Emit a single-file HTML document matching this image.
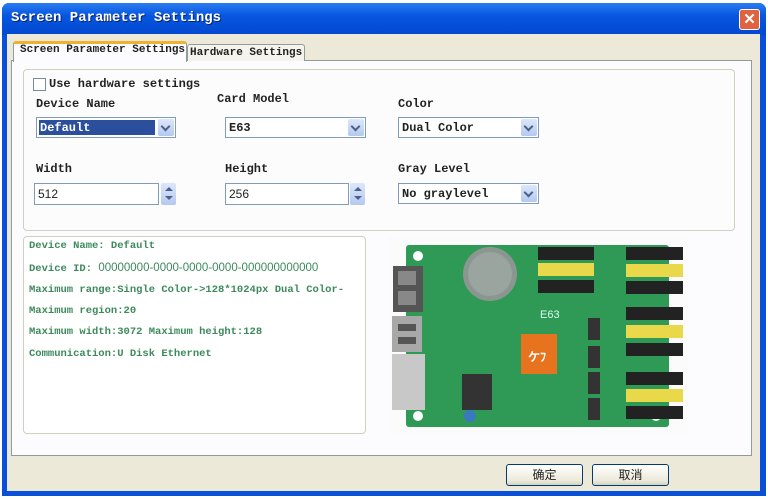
<!DOCTYPE html>
<html><head><meta charset="utf-8"><style>
*{margin:0;padding:0;box-sizing:border-box}
body{width:768px;height:499px;background:#fff;position:relative;overflow:hidden;font-family:"Liberation Mono","Noto Sans CJK SC",monospace;font-size:12px;color:#222}
.a{position:absolute}
.win{left:2px;top:3px;width:764px;height:493px;background:#0a4fd8;border-radius:7px 7px 0 0}
.title{left:2px;top:3px;width:764px;height:32px;background:linear-gradient(#2a7cf0,#0656e0 40%,#0348d0);border-radius:7px 7px 0 0}
.body{left:7px;top:34px;width:753px;height:457px;background:#ece9d8}
.lbl{font-weight:bold;font-size:12px;color:#222;white-space:nowrap}
.combo{background:#fff;border:1px solid #7f9db9;height:21px}
.combo .t{position:absolute;left:3px;top:3px;font-size:12px;font-weight:bold}
.combo .b{position:absolute;right:1px;top:1px;width:16px;height:17px;background:linear-gradient(#dce7fb,#b4c8f0);border-radius:2px}
.combo .b:after{content:"";position:absolute;left:4px;top:4px;width:5px;height:5px;border-right:2px solid #4d6185;border-bottom:2px solid #4d6185;transform:rotate(45deg)}
.spin{width:15px;height:22px;background:linear-gradient(#dce7fb,#b4c8f0);border-radius:2px}
.spin:before,.spin:after{content:"";position:absolute;left:4px;width:0;height:0;border-left:4px solid transparent;border-right:4px solid transparent}
.spin:before{top:4px;border-bottom:4px solid #4d6185}
.spin:after{top:13px;border-top:4px solid #4d6185}
.info{color:#3c8a5c;font-size:10.5px;font-weight:bold;white-space:nowrap}
.btn{border:1px solid #003c74;border-radius:3px;background:linear-gradient(#fff,#ece9d8 80%,#d6d0c0);text-align:center;font-family:"Noto Sans CJK SC",sans-serif;font-size:12px;line-height:20px}
</style></head><body>
<div class="a win"></div>
<div class="a title"></div>
<div class="a" style="left:11px;top:10px;color:#fff;font-family:'Liberation Mono',monospace;font-weight:bold;font-size:14px;text-shadow:1px 1px 0 #0a246a">Screen Parameter Settings</div>
<div class="a" style="left:739px;top:9px;width:21px;height:21px;background:#e0623e;border:1px solid #fff;border-radius:3px;color:#fff;font:bold 15px 'Liberation Sans',sans-serif;text-align:center;line-height:19px">✕</div>
<div class="a body"></div>
<div class="a" style="left:11px;top:60px;width:741px;height:396px;background:#fcfcfe;border:1px solid #919b9c"></div>
<div class="a" style="left:13px;top:41px;width:174px;height:21px;background:#fcfcfe;border:1px solid #919b9c;border-bottom:none;border-top:3px solid #f0b030;border-radius:3px 3px 0 0"></div>
<div class="a" style="left:20px;top:44px;font-size:11px;font-weight:bold">Screen Parameter Settings</div>
<div class="a" style="left:187px;top:44px;width:118px;height:17px;background:#f4f3ee;border:1px solid #919b9c;border-bottom:none;border-radius:3px 3px 0 0"></div>
<div class="a" style="left:190px;top:47px;font-size:11px;font-weight:bold">Hardware Settings</div>
<div class="a" style="left:23px;top:69px;width:712px;height:162px;border:1px solid #d0d0bf;border-radius:4px;background:#fcfcfc"></div>
<div class="a" style="left:33px;top:78px;width:13px;height:13px;border:1px solid #7a8a99;background:#fff"></div>
<div class="a lbl" style="left:49px;top:77px">Use hardware settings</div>
<div class="a lbl" style="left:36px;top:97px">Device Name</div>
<div class="a lbl" style="left:217px;top:92px">Card Model</div>
<div class="a lbl" style="left:398px;top:97px">Color</div>
<div class="a combo" style="left:36px;top:117px;width:140px"><div class="a" style="left:2px;top:2px;width:116px;height:15px;background:#2b4f9c"></div><span class="t" style="color:#fff">Default</span><div class="b"></div></div>
<div class="a combo" style="left:225px;top:117px;width:141px"><span class="t">E63</span><div class="b"></div></div>
<div class="a combo" style="left:398px;top:117px;width:141px"><span class="t">Dual Color</span><div class="b"></div></div>
<div class="a lbl" style="left:36px;top:162px">Width</div>
<div class="a lbl" style="left:225px;top:162px">Height</div>
<div class="a lbl" style="left:398px;top:162px">Gray Level</div>
<div class="a combo" style="left:34px;top:183px;width:125px;height:22px"><span class="t" style="font-weight:normal;font-family:'Liberation Sans',sans-serif">512</span></div>
<div class="a spin" style="left:161px;top:183px"></div>
<div class="a combo" style="left:225px;top:183px;width:124px;height:22px"><span class="t" style="font-weight:normal;font-family:'Liberation Sans',sans-serif">256</span></div>
<div class="a spin" style="left:350px;top:183px"></div>
<div class="a combo" style="left:398px;top:183px;width:141px"><span class="t">No graylevel</span><div class="b"></div></div>
<div class="a" style="left:23px;top:236px;width:343px;height:198px;border:1px solid #d0d0bf;border-radius:4px;background:#fff"></div>
<div class="a info" style="left:29px;top:240px">Device Name: Default</div>
<div class="a info" style="left:29px;top:262px">Device ID:  <span style="font-family:'Liberation Sans',sans-serif;font-weight:normal;font-size:11.5px">00000000-0000-0000-0000-000000000000</span></div>
<div class="a info" style="left:29px;top:284px">Maximum range:Single Color-&gt;128*1024px  Dual Color-</div>
<div class="a info" style="left:29px;top:305px">Maximum region:20</div>
<div class="a info" style="left:29px;top:326px">Maximum width:3072 Maximum height:128</div>
<div class="a info" style="left:29px;top:348px">Communication:U Disk  Ethernet</div>
<svg class="a" style="left:388px;top:236px" width="300" height="198" viewBox="0 0 300 198">
<rect width="300" height="198" fill="#fbfbfb"/>
<rect x="18" y="9" width="263" height="182" fill="#2f9a55" rx="3"/>
<g fill="#fff"><circle cx="30" cy="20" r="5"/><circle cx="268" cy="19" r="5"/><circle cx="30" cy="180" r="5"/><circle cx="268" cy="180" r="5"/></g>
<circle cx="102" cy="38" r="27" fill="#8b9690"/><circle cx="102" cy="38" r="22" fill="#9aa59f"/>
<rect x="5" y="30" width="30" height="46" fill="#555"/><rect x="10" y="35" width="18" height="14" fill="#888"/><rect x="10" y="55" width="18" height="14" fill="#888"/>
<rect x="4" y="80" width="30" height="36" fill="#a8a8a8"/><rect x="10" y="88" width="18" height="7" fill="#555"/><rect x="10" y="101" width="18" height="7" fill="#555"/>
<rect x="4" y="118" width="33" height="56" fill="#c8c8c8"/>
<rect x="133" y="98" width="36" height="40" fill="#e8731e"/><text x="140" y="125" font-size="12" fill="#fff" font-weight="bold" font-family="Liberation Sans">ケﾌ</text>
<text x="152" y="82" font-size="11" fill="#dfe" font-family="Liberation Sans">E63</text>
<rect x="74" y="138" width="30" height="36" fill="#333"/>
<g fill="#333"><rect x="200" y="82" width="12" height="22"/><rect x="200" y="110" width="12" height="22"/><rect x="200" y="136" width="12" height="22"/><rect x="200" y="162" width="12" height="22"/></g>
<g>
<rect x="150" y="11" width="56" height="13" fill="#222"/><rect x="150" y="27" width="56" height="13" fill="#e8d84a"/><rect x="150" y="44" width="56" height="13" fill="#222"/>
<rect x="238" y="11" width="57" height="13" fill="#222"/><rect x="238" y="28" width="57" height="13" fill="#e8d84a"/><rect x="238" y="45" width="57" height="13" fill="#222"/>
<rect x="238" y="71" width="57" height="13" fill="#222"/><rect x="238" y="89" width="57" height="13" fill="#e8d84a"/><rect x="238" y="107" width="57" height="13" fill="#222"/>
<rect x="238" y="136" width="57" height="13" fill="#222"/><rect x="238" y="153" width="57" height="13" fill="#e8d84a"/><rect x="238" y="170" width="57" height="13" fill="#222"/>
</g>
<circle cx="82" cy="180" r="6" fill="#3a78c0"/>
</svg>
<div class="a btn" style="left:506px;top:464px;width:77px;height:22px">确定</div>
<div class="a btn" style="left:592px;top:464px;width:77px;height:22px">取消</div>
</body></html>
